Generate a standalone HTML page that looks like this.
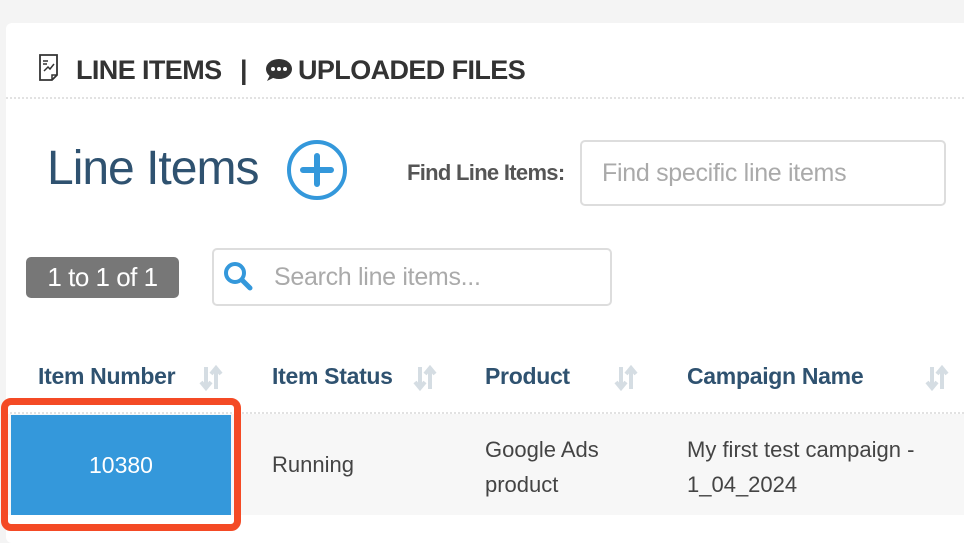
<!DOCTYPE html>
<html><head><meta charset="utf-8"><style>
*{margin:0;padding:0;box-sizing:border-box}
body{width:964px;height:534px;background:#f4f4f4;font-family:"Liberation Sans",sans-serif;position:relative;overflow:hidden}
.card{position:absolute;left:6px;top:23px;width:970px;height:520px;background:#fff;border-radius:6px}
.a{position:absolute;white-space:nowrap}
.tab{font-weight:bold;font-size:27px;color:#333;top:55px;letter-spacing:-0.6px}
.hdr{font-weight:bold;font-size:23px;color:#2f5270;top:363px;letter-spacing:-0.3px}
.cell{font-size:22px;color:#444}
.sort{position:absolute;top:365px}
</style></head><body>
<div class="card"></div>
<svg class="a" style="left:38px;top:54px" width="22" height="27" viewBox="0 0 22 27"><path d="M2 1h17v20l-5 5H2z" fill="none" stroke="#333" stroke-width="1.8"/><path d="M14 26v-5h5" fill="none" stroke="#333" stroke-width="1.5"/><path d="M5 7h5M5 10h4M6 17l4-4 2 2 4-5" stroke="#333" stroke-width="1.5" fill="none"/></svg>
<div class="a tab" style="left:76px">LINE ITEMS</div>
<div class="a tab" style="left:240px">|</div>
<svg class="a" style="left:265px;top:58px" width="30" height="24" viewBox="0 0 30 24"><ellipse cx="14" cy="11" rx="13" ry="10" fill="#333"/><path d="M5 17l-3 6 8-4z" fill="#333"/><circle cx="8" cy="11" r="2" fill="#fff"/><circle cx="14" cy="11" r="2" fill="#fff"/><circle cx="20" cy="11" r="2" fill="#fff"/></svg>
<div class="a tab" style="left:298px">UPLOADED FILES</div>
<div class="a" style="left:6px;right:0;top:97px;border-top:2px dotted #e2e2e2"></div>
<div class="a" style="left:47px;top:141px;font-size:48px;color:#2f5270;letter-spacing:-1px">Line Items</div>
<svg class="a" style="left:286px;top:139px" width="62" height="62"><circle cx="31" cy="31" r="28" fill="none" stroke="#3498db" stroke-width="4"/><path d="M31 17v28M17 31h28" stroke="#3498db" stroke-width="6" stroke-linecap="round"/></svg>
<div class="a" style="left:407px;top:160px;font-size:22px;font-weight:bold;color:#555;letter-spacing:-0.7px">Find Line Items:</div>
<div class="a" style="left:580px;top:140px;width:366px;height:66px;border:2px solid #ddd;border-radius:5px"></div>
<div class="a" style="left:602px;top:159px;font-size:25px;color:#aaa;letter-spacing:-0.3px">Find specific line items</div>
<div class="a" style="left:26px;top:257px;width:153px;height:41px;background:#777;border-radius:5px;color:#fff;font-size:26px;text-align:center;line-height:41px;letter-spacing:-0.5px">1 to 1 of 1</div>
<div class="a" style="left:212px;top:248px;width:400px;height:58px;border:2px solid #ddd;border-radius:5px"></div>
<svg class="a" style="left:222px;top:260px" width="34" height="34"><circle cx="13" cy="13" r="9" fill="none" stroke="#3498db" stroke-width="4"/><path d="M20 20l8 8" stroke="#3498db" stroke-width="5" stroke-linecap="round"/></svg>
<div class="a" style="left:274px;top:263px;font-size:25px;color:#aaa;letter-spacing:-0.3px">Search line items...</div>
<div class="a hdr" style="left:38px">Item Number</div>
<div class="a hdr" style="left:272px">Item Status</div>
<div class="a hdr" style="left:485px">Product</div>
<div class="a hdr" style="left:687px">Campaign Name</div>
<svg class="sort" style="left:199px" width="24" height="26"><path d="M7 2v20M2 17l5 6 5-6M17 24V4M12 9l5-6 5 6" stroke="#d5dde3" stroke-width="4" fill="none"/></svg>
<svg class="sort" style="left:413px" width="24" height="26"><path d="M7 2v20M2 17l5 6 5-6M17 24V4M12 9l5-6 5 6" stroke="#d5dde3" stroke-width="4" fill="none"/></svg>
<svg class="sort" style="left:614px" width="24" height="26"><path d="M7 2v20M2 17l5 6 5-6M17 24V4M12 9l5-6 5 6" stroke="#d5dde3" stroke-width="4" fill="none"/></svg>
<svg class="sort" style="left:925px" width="24" height="26"><path d="M7 2v20M2 17l5 6 5-6M17 24V4M12 9l5-6 5 6" stroke="#d5dde3" stroke-width="4" fill="none"/></svg>
<div class="a" style="left:6px;right:0;top:412px;border-top:2px dotted #e2e2e2"></div>
<div class="a" style="left:6px;right:0;top:414px;height:101px;background:#f7f7f7"></div>
<div class="a" style="left:11px;top:415px;width:220px;height:100px;background:#3498db;color:#fff;font-size:23px;text-align:center;line-height:100px">10380</div>
<div class="a" style="left:1px;top:398px;width:240px;height:133px;border:7px solid #f44a25;border-radius:10px"></div>
<div class="a cell" style="left:272px;top:452px">Running</div>
<div class="a cell" style="left:485px;top:432px;line-height:35px">Google Ads<br>product</div>
<div class="a cell" style="left:687px;top:432px;line-height:35px">My first test campaign -<br>1_04_2024</div>
</body></html>
